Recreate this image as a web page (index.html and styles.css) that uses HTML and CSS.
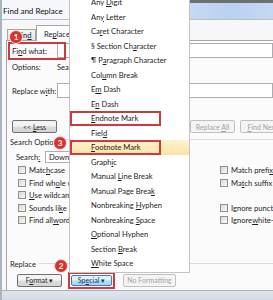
FILE: index.html
```html
<!DOCTYPE html>
<html lang="en">
<head>
    <meta charset="UTF-8">
    <title>Find and Replace</title>
    <link rel="stylesheet" href="styles.css">
</head>
<body>
<div class="window">

    <!-- Title bar -->
    <div class="titlebar">
        <div class="title">Find and Replace</div>
        <div class="glass"></div>
    </div>

    <div class="dialog">
        <div class="tabs">
            <div class="tab">Fin<u>d</u></div>
            <div class="tab active">Re<u>p</u>lace</div>
        </div>

        <div class="page">
            <div class="row find-row">
                <span class="label">Fi<u>n</u>d what:</span>
                <div class="input"></div>
            </div>
            <div class="row options-row">
                <span class="label">Options:</span>
                <span class="value">Search Down</span>
            </div>
            <div class="row replace-row">
                <span class="label">Replace w<u>i</u>th:</span>
                <div class="input"></div>
            </div>
            <div class="row buttons-row">
                <button class="btn btn-less">&lt;&lt; <u>L</u>ess</button>
                <button class="btn btn-replace">Replace</button>
                <button class="btn" disabled>Replace <u>A</u>ll</button>
                <button class="btn" disabled><u>F</u>ind Next</button>
            </div>

            <div class="group-title search-title">
                <span>Search Options</span>
                <span class="group-line"></span>
            </div>
            <div class="row search-row">
                <span class="label">Search<u>:</u></span>
                <div class="select">Down</div>
            </div>

            <div class="checks">
                <label class="check"><span class="box"></span>Matc<u>h</u> case</label>
                <label class="check"><span class="box"></span>Match prefi<u>x</u></label>
                <label class="check"><span class="box"></span>Find wh<u>o</u>le words only</label>
                <label class="check"><span class="box"></span>Ma<u>t</u>ch suffix</label>
                <label class="check"><span class="box"></span><u>U</u>se wildcards</label>
                <span></span>
                <label class="check"><span class="box"></span>Sounds li<u>k</u>e (English)</label>
                <label class="check"><span class="box"></span>Ignore punct<u>u</u>ation characters</label>
                <label class="check"><span class="box"></span>Find all <u>w</u>ord forms (English)</label>
                <label class="check"><span class="box"></span>Ignore <u>w</u>hite-space characters</label>
            </div>

            <div class="group-title replace-title">
                <span>Replace</span>
                <span class="group-line"></span>
            </div>
            <div class="row format-row">
                <button class="btn btn-format">F<u>o</u>rmat &#9662;</button>
                <span class="marked-btn"><button class="btn btn-special">Sp<u>e</u>cial &#9662;</button></span>
                <button class="btn btn-noformat" disabled>No Formatting</button>
            </div>
        </div>
    </div>

    <div class="frame-bottom"></div>

    <!-- Special dropdown menu -->
    <ul class="menu">
        <li>Any <u>D</u>igit</li>
        <li>An<u>y</u> Letter</li>
        <li>Ca<u>r</u>et Character</li>
        <li>&sect; Section Ch<u>a</u>racter</li>
        <li>&para; P<u>a</u>ragraph Character</li>
        <li>Col<u>u</u>mn Break</li>
        <li>E<u>m</u> Dash</li>
        <li>E<u>n</u> Dash</li>
        <li class="marked"><span><u>E</u>ndnote Mark</span></li>
        <li>Fiel<u>d</u></li>
        <li class="marked hover"><span><u>F</u>ootnote Mark</span></li>
        <li>Graph<u>i</u>c</li>
        <li>Manual <u>L</u>ine Break</li>
        <li>Manual Page Brea<u>k</u></li>
        <li>Nonbreaking <u>H</u>yphen</li>
        <li>Nonbreaking <u>S</u>pace</li>
        <li><u>O</u>ptional Hyphen</li>
        <li>Section <u>B</u>reak</li>
        <li><u>W</u>hite Space</li>
    </ul>

    <!-- Annotations -->
    <div class="find-box"></div>
    <span class="badge badge-1">1</span>
    <span class="badge badge-2">2</span>
    <span class="badge badge-3">3</span>
</div>
</body>
</html>
```

FILE: styles.css
```css
* {
    box-sizing: border-box;
    margin: 0;
    padding: 0;
}
body {
    width: 273px;
    height: 300px;
    overflow: hidden;
    font-family: 'Lato', 'Open Sans', sans-serif;
    font-size: 7.6px;
    color: #1e1e1e;
    background: #f0f0f0;
}
u {
    text-decoration-thickness: 1px;
    text-underline-offset: 1px;
}
.window {
    position: relative;
    width: 273px;
    height: 300px;
    overflow: hidden;
    border-left: 2px solid #a9b4c2;
    background: #f7f7f7;
}
.titlebar {
    display: flex;
    height: 20px;
    border-bottom: 1px solid #b7c0c9;
}
.title {
    width: 120px;
    padding: 6px 0 0 1px;
    font-size: 8px;
    background: #f5f7fa;
    color: #111;
}
.glass {
    flex: 1;
    border-top: 3px solid #6d6f73;
    background: linear-gradient(100deg, #b5cfee 0%, #c8dcf3 40%, #b9d2ef 70%, #c4d9f2 100%);
}
.dialog {
    display: flex;
    flex-direction: column;
}
.tabs {
    display: flex;
    align-items: flex-end;
    height: 20px;
    padding-left: 5px;
}
.tab {
    height: 12px;
    width: 29px;
    margin-bottom: -1px;
    padding: 0 0 0 9px;
    border: 1px solid #a6a6a6;
    border-bottom: none;
    background: linear-gradient(#f4f4f4, #e2e2e2);
    line-height: 11px;
}
.tab.active {
    height: 16px;
    width: 40px;
    padding: 3px 0 0 7px;
    background: #fff;
    position: relative;
    z-index: 1;
}
.page {
    display: flex;
    flex-direction: column;
    height: 250px;
    padding-left: 5px;
    border-top: 1px solid #a6a6a6;
    border-left: 1px solid #a6a6a6;
    margin-left: 4px;
    background: #fbfbfb;
}
.row {
    display: flex;
    align-items: center;
}
.label {
    width: 45px;
    flex-shrink: 0;
    white-space: nowrap;
}
.input {
    flex: 1;
    height: 15px;
    border: 1px solid #abadb3;
    background: #fff;
}
.find-row {
    margin-top: 2px;
    height: 15px;
}
.options-row {
    height: 12px;
    margin-top: 3px;
}
.replace-row {
    margin-top: 10px;
    height: 15px;
}
.buttons-row {
    margin-top: 22px;
    height: 13px;
    gap: 5px;
}
.btn {
    height: 13px;
    width: 45px;
    flex-shrink: 0;
    font: inherit;
    font-size: 7px;
    color: #1e1e1e;
    border: 1px solid #707070;
    border-radius: 2px;
    white-space: nowrap;
    background: linear-gradient(#f3f3f3 45%, #dcdcdc 55%, #d4d4d4);
}
.btn:disabled {
    color: #a3a3a3;
    border-color: #bdc1c4;
    background: #f4f4f4;
}
.btn-replace {
    margin-left: 78px;
}
.group-title {
    display: flex;
    align-items: center;
    height: 12px;
    margin-left: -2px;
}
.group-line {
    flex: 1;
    height: 1px;
    margin-left: 3px;
    background: #d5dfe5;
}
.search-title {
    margin-top: 3px;
}
.search-title .group-line {
    margin-top: -6px;
}
.search-row {
    margin-top: 3px;
    height: 12px;
    padding-left: 4px;
}
.search-row .label {
    width: 29px;
}
.select {
    width: 100px;
    height: 12px;
    padding-left: 3px;
    border: 1px solid #abadb3;
    background: #fff;
    line-height: 10px;
}
.checks {
    display: grid;
    grid-template-columns: 202px 1fr;
    grid-auto-rows: 12.5px;
    margin: 1px 0 0 6px;
}
.check {
    display: flex;
    align-items: center;
    white-space: nowrap;
}
.box {
    width: 8px;
    height: 8px;
    margin-right: 3px;
    border: 1px solid #8f8f8f;
    background: linear-gradient(135deg, #dadada, #f7f7f7);
}
.replace-title {
    margin-top: 31px;
}
.format-row {
    margin-top: 2px;
    padding-left: 5px;
}
.marked-btn {
    display: flex;
    margin-left: 6px;
    padding: 1px;
    border: 2px solid #cf3a3e;
}
.btn-special {
    height: 11px;
    width: 41px;
    border-color: #3c7fb1;
    background: linear-gradient(#e3f2fc 40%, #b6dcf6 55%, #a7d3f2);
    color: #10375c;
}
.btn-noformat {
    width: 53px;
    margin-left: 8px;
}
.frame-bottom {
    height: 12px;
    border-top: 1px solid #a8b3bf;
    background: linear-gradient(#dfe6ee, #cfd8e2);
}
.menu {
    position: absolute;
    left: 67px;
    top: -7px;
    width: 121px;
    list-style: none;
    padding: 1px 0;
    background: #fff;
    border: 1px solid #c4c4c4;
    z-index: 5;
}
.menu li {
    height: 14.5px;
    line-height: 14.5px;
    padding-left: 21px;
    white-space: nowrap;
}
.menu li.marked {
    padding-left: 0;
}
.menu li.marked span {
    display: inline-block;
    width: 91px;
    height: 15px;
    line-height: 11px;
    padding-left: 19px;
    border: 2px solid #cf3a3e;
}
.menu li.hover {
    background: linear-gradient(#fef3d1, #fbe3a6);
}
.find-box {
    position: absolute;
    left: 6px;
    top: 42px;
    width: 58px;
    height: 18px;
    border: 2px solid #cf3a3e;
}
.badge {
    position: absolute;
    width: 14px;
    height: 14px;
    border-radius: 50%;
    background: #d6342f;
    border: 1px solid #fbe3e0;
    color: #fff;
    font-size: 8px;
    font-weight: bold;
    line-height: 12px;
    text-align: center;
    z-index: 6;
}
.badge-1 {
    left: 7px;
    top: 30px;
}
.badge-2 {
    left: 52px;
    top: 259px;
}
.badge-3 {
    left: 51px;
    top: 136px;
}
```
